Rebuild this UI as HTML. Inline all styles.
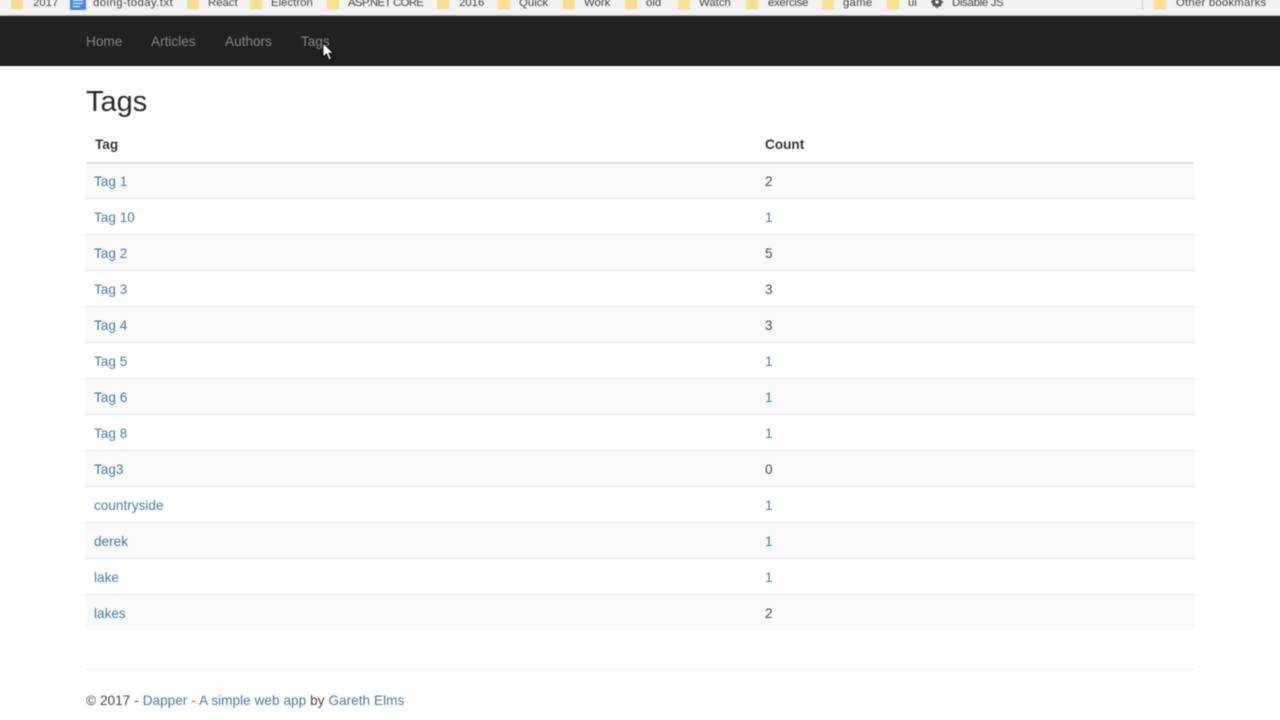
<!DOCTYPE html>
<html>
<head>
<meta charset="utf-8">
<title>Tags</title>
<style>
html,body{margin:0;padding:0;background:#fff;}
body{width:1280px;height:720px;overflow:hidden;position:relative;font-family:"Liberation Sans",sans-serif;color:#444;}
#all{position:absolute;left:0;top:0;width:1280px;height:720px;filter:blur(0.4px);}
.abs,.bm,.f,.nav a{position:absolute;white-space:nowrap;}
#bar{position:absolute;left:-10px;top:-10px;width:1300px;height:25px;background:#f2f2f2;border-bottom:1px solid #bbb;overflow:hidden;}
#barin{position:absolute;left:10px;top:10px;width:1280px;height:15px;}
.bm{font-size:11.4px;line-height:14px;top:-4px;color:#444;}
.f{top:-3px;width:12px;height:12px;background:#f9df8e;border-radius:1px;}
#nav{position:absolute;left:-10px;top:16px;width:1300px;height:50px;background:#212121;border-bottom:1px solid #111;box-sizing:border-box;}
.nav a{top:18px;font-size:13.6px;line-height:16px;color:#858585;text-decoration:none;}
h1{position:absolute;margin:0;left:86px;top:85px;font-size:29px;line-height:34px;font-weight:400;color:#2b2b2b;}
.row{position:absolute;left:86px;width:1108px;height:36px;box-sizing:border-box;border-top:1px solid #e2e2e2;font-size:13.6px;}
.row.o{background:#f9f9f9;}
.row a,.row span{position:absolute;top:11px;line-height:16px;text-decoration:none;}
.row a{color:#4679a8;}
.row span{color:#4a4a4a;}
.row .c{left:679px;}
.row .t{left:8px;}
.head{position:absolute;font-size:13.6px;font-weight:700;line-height:16px;top:137px;color:#333;}
#hr{position:absolute;left:86px;top:162px;width:1108px;height:2px;background:#ddd;}
#fhr{position:absolute;left:86px;top:669px;width:1108px;height:1px;background:#efefef;}
#foot{position:absolute;left:86px;top:693px;font-size:13.6px;line-height:16px;color:#444;white-space:nowrap;word-spacing:0.2px;}
#foot a{color:#4679a8;text-decoration:none;}
</style>
</head>
<body>
<div id="all">
<div id="bar"><div id="barin">
<div class="f" style="left:11px"></div><div class="bm" style="left:33px">2017</div>
<svg class="abs" style="left:70px;top:-3px" width="16" height="13"><rect width="16" height="13" rx="1" fill="#4a86e8"/><path d="M3 3.500h10M3 6.500h10M3 9.500h7" stroke="#fff" stroke-width="1"/></svg>
<div class="bm" style="left:93px;letter-spacing:0.42px">doing-today.txt</div>
<div class="f" style="left:187px"></div><div class="bm" style="left:208px">React</div>
<div class="f" style="left:250px"></div><div class="bm" style="left:271px">Electron</div>
<div class="f" style="left:327px"></div><div class="bm" style="left:348px;letter-spacing:-0.66px">ASP.NET CORE</div>
<div class="f" style="left:437px"></div><div class="bm" style="left:459px">2016</div>
<div class="f" style="left:498px"></div><div class="bm" style="left:519px">Quick</div>
<div class="f" style="left:563px"></div><div class="bm" style="left:584px">Work</div>
<div class="f" style="left:625px"></div><div class="bm" style="left:646px">old</div>
<div class="f" style="left:678px"></div><div class="bm" style="left:699px">Watch</div>
<div class="f" style="left:746px"></div><div class="bm" style="left:768px;letter-spacing:-0.3px">exercise</div>
<div class="f" style="left:822px"></div><div class="bm" style="left:843px;letter-spacing:0.2px">game</div>
<div class="f" style="left:887px"></div><div class="bm" style="left:908px">ui</div>
<svg class="abs" style="left:929px;top:-4px" width="16" height="14"><circle cx="8" cy="6" r="3.500" fill="none" stroke="#555" stroke-width="3"/><path d="M8 0v12M2 6h12M4 2l8 8M12 2l-8 8" stroke="#555" stroke-width="1.800"/><circle cx="8" cy="6" r="1.800" fill="#f2f2f2"/></svg>
<div class="bm" style="left:952px;letter-spacing:-0.3px">Disable JS</div>
<div class="abs" style="left:1142px;top:0;width:1px;height:10px;background:#ccc"></div>
<div class="f" style="left:1154px"></div><div class="bm" style="left:1176px;letter-spacing:0.2px">Other bookmarks</div>
</div></div>
<div id="nav" class="nav">
<a style="left:96px">Home</a>
<a style="left:161px">Articles</a>
<a style="left:235px">Authors</a>
<a style="left:311px">Tags</a>
</div>
<svg class="abs" style="left:322px;top:42px" width="12" height="19"><path d="M1 1v14l3.500-3 2.500 6 2.500-1-2.500-5.700h4.500z" fill="#fff" stroke="#111" stroke-width="1"/></svg>
<h1>Tags</h1>
<div class="head" style="left:95px">Tag</div>
<div class="head" style="left:765px">Count</div>
<div class="row o" style="top:163px;border-top:0;height:36px"><a class="t">Tag 1</a><span class="c">2</span></div>
<div id="hr"></div>
<div class="row" style="top:198px"><a class="t">Tag 10</a><a class="c">1</a></div>
<div class="row o" style="top:234px"><a class="t">Tag 2</a><span class="c">5</span></div>
<div class="row" style="top:270px"><a class="t">Tag 3</a><span class="c">3</span></div>
<div class="row o" style="top:306px"><a class="t">Tag 4</a><span class="c">3</span></div>
<div class="row" style="top:342px"><a class="t">Tag 5</a><a class="c">1</a></div>
<div class="row o" style="top:378px"><a class="t">Tag 6</a><a class="c">1</a></div>
<div class="row" style="top:414px"><a class="t">Tag 8</a><a class="c">1</a></div>
<div class="row o" style="top:450px"><a class="t">Tag3</a><span class="c">0</span></div>
<div class="row" style="top:486px"><a class="t">countryside</a><a class="c">1</a></div>
<div class="row o" style="top:522px"><a class="t">derek</a><a class="c">1</a></div>
<div class="row" style="top:558px"><a class="t">lake</a><a class="c">1</a></div>
<div class="row o" style="top:594px"><a class="t">lakes</a><span class="c">2</span></div>
<div id="fhr"></div>
<div id="foot">© 2017 - <a>Dapper - A simple web app</a> by <a>Gareth Elms</a></div>
</div>
</body>
</html>
